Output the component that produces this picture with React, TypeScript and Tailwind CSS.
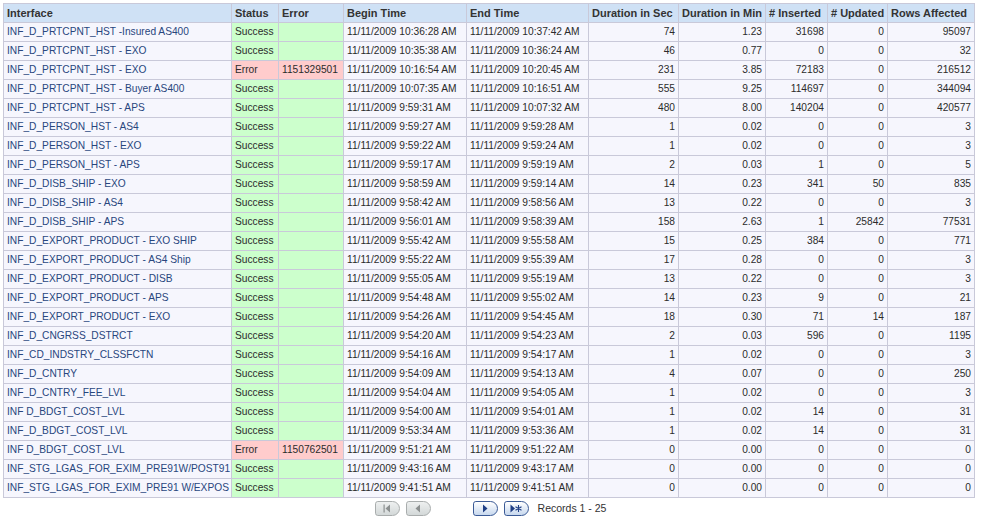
import React from 'react';

type Row = {
  name: string;
  error?: string;
  begin: string;
  end: string;
  sec: number;
  min: string;
  ins: number;
  upd: number;
  rows: number;
};

const D = '11/11/2009 ';

const rows: Row[] = [
  { name: 'INF_D_PRTCPNT_HST -Insured AS400', begin: '10:36:28 AM', end: '10:37:42 AM', sec: 74, min: '1.23', ins: 31698, upd: 0, rows: 95097 },
  { name: 'INF_D_PRTCPNT_HST - EXO', begin: '10:35:38 AM', end: '10:36:24 AM', sec: 46, min: '0.77', ins: 0, upd: 0, rows: 32 },
  { name: 'INF_D_PRTCPNT_HST - EXO', error: '1151329501', begin: '10:16:54 AM', end: '10:20:45 AM', sec: 231, min: '3.85', ins: 72183, upd: 0, rows: 216512 },
  { name: 'INF_D_PRTCPNT_HST - Buyer AS400', begin: '10:07:35 AM', end: '10:16:51 AM', sec: 555, min: '9.25', ins: 114697, upd: 0, rows: 344094 },
  { name: 'INF_D_PRTCPNT_HST - APS', begin: '9:59:31 AM', end: '10:07:32 AM', sec: 480, min: '8.00', ins: 140204, upd: 0, rows: 420577 },
  { name: 'INF_D_PERSON_HST - AS4', begin: '9:59:27 AM', end: '9:59:28 AM', sec: 1, min: '0.02', ins: 0, upd: 0, rows: 3 },
  { name: 'INF_D_PERSON_HST - EXO', begin: '9:59:22 AM', end: '9:59:24 AM', sec: 1, min: '0.02', ins: 0, upd: 0, rows: 3 },
  { name: 'INF_D_PERSON_HST - APS', begin: '9:59:17 AM', end: '9:59:19 AM', sec: 2, min: '0.03', ins: 1, upd: 0, rows: 5 },
  { name: 'INF_D_DISB_SHIP - EXO', begin: '9:58:59 AM', end: '9:59:14 AM', sec: 14, min: '0.23', ins: 341, upd: 50, rows: 835 },
  { name: 'INF_D_DISB_SHIP - AS4', begin: '9:58:42 AM', end: '9:58:56 AM', sec: 13, min: '0.22', ins: 0, upd: 0, rows: 3 },
  { name: 'INF_D_DISB_SHIP - APS', begin: '9:56:01 AM', end: '9:58:39 AM', sec: 158, min: '2.63', ins: 1, upd: 25842, rows: 77531 },
  { name: 'INF_D_EXPORT_PRODUCT - EXO SHIP', begin: '9:55:42 AM', end: '9:55:58 AM', sec: 15, min: '0.25', ins: 384, upd: 0, rows: 771 },
  { name: 'INF_D_EXPORT_PRODUCT - AS4 Ship', begin: '9:55:22 AM', end: '9:55:39 AM', sec: 17, min: '0.28', ins: 0, upd: 0, rows: 3 },
  { name: 'INF_D_EXPORT_PRODUCT - DISB', begin: '9:55:05 AM', end: '9:55:19 AM', sec: 13, min: '0.22', ins: 0, upd: 0, rows: 3 },
  { name: 'INF_D_EXPORT_PRODUCT - APS', begin: '9:54:48 AM', end: '9:55:02 AM', sec: 14, min: '0.23', ins: 9, upd: 0, rows: 21 },
  { name: 'INF_D_EXPORT_PRODUCT - EXO', begin: '9:54:26 AM', end: '9:54:45 AM', sec: 18, min: '0.30', ins: 71, upd: 14, rows: 187 },
  { name: 'INF_D_CNGRSS_DSTRCT', begin: '9:54:20 AM', end: '9:54:23 AM', sec: 2, min: '0.03', ins: 596, upd: 0, rows: 1195 },
  { name: 'INF_CD_INDSTRY_CLSSFCTN', begin: '9:54:16 AM', end: '9:54:17 AM', sec: 1, min: '0.02', ins: 0, upd: 0, rows: 3 },
  { name: 'INF_D_CNTRY', begin: '9:54:09 AM', end: '9:54:13 AM', sec: 4, min: '0.07', ins: 0, upd: 0, rows: 250 },
  { name: 'INF_D_CNTRY_FEE_LVL', begin: '9:54:04 AM', end: '9:54:05 AM', sec: 1, min: '0.02', ins: 0, upd: 0, rows: 3 },
  { name: 'INF D_BDGT_COST_LVL', begin: '9:54:00 AM', end: '9:54:01 AM', sec: 1, min: '0.02', ins: 14, upd: 0, rows: 31 },
  { name: 'INF_D_BDGT_COST_LVL', begin: '9:53:34 AM', end: '9:53:36 AM', sec: 1, min: '0.02', ins: 14, upd: 0, rows: 31 },
  { name: 'INF D_BDGT_COST_LVL', error: '1150762501', begin: '9:51:21 AM', end: '9:51:22 AM', sec: 0, min: '0.00', ins: 0, upd: 0, rows: 0 },
  { name: 'INF_STG_LGAS_FOR_EXIM_PRE91W/POST91', begin: '9:43:16 AM', end: '9:43:17 AM', sec: 0, min: '0.00', ins: 0, upd: 0, rows: 0 },
  { name: 'INF_STG_LGAS_FOR_EXIM_PRE91 W/EXPOS', begin: '9:41:51 AM', end: '9:41:51 AM', sec: 0, min: '0.00', ins: 0, upd: 0, rows: 0 },
];

const headers = [
  'Interface', 'Status', 'Error', 'Begin Time', 'End Time',
  'Duration in Sec', 'Duration in Min', '# Inserted', '# Updated', 'Rows Affected',
];
const widths = [228, 47, 65, 123, 122, 90, 87, 62, 60, 87];

const cell = 'border border-[#c9c9d9] px-[3px] py-0 h-[19px] whitespace-nowrap overflow-hidden';
const num = `${cell} text-right`;

function PagerButton({ enabled, children }: { enabled: boolean; children: React.ReactNode }) {
  return (
    <div
      className={
        enabled
          ? 'w-[25px] h-[15px] flex items-center justify-center rounded-l-[3px] rounded-r-[8px] border border-[#3a5a96] bg-gradient-to-b from-white to-[#c7d8ee]'
          : 'w-[25px] h-[15px] flex items-center justify-center rounded-l-[3px] rounded-r-[8px] border border-[#a9adad] bg-gradient-to-b from-[#eef0f0] to-[#d3d8d8]'
      }
    >
      {children}
    </div>
  );
}

export default function App() {
  return (
    <div className="bg-white w-[981px] h-[527px] pl-[3px] pt-[3px] font-['Liberation_Sans',Arial,sans-serif] text-[10.2px] text-[#2b2b2b]">
      <table className="table-fixed border-collapse w-[971px]">
        <colgroup>
          {widths.map((w, i) => (
            <col key={i} style={{ width: w }} />
          ))}
        </colgroup>
        <thead>
          <tr className="bg-[#cfe1f5]">
            {headers.map((h) => (
              <th
                key={h}
                className="border border-[#c9c9d9] px-[3px] py-0 h-[19px] whitespace-nowrap text-left font-bold text-[11px] text-[#333]"
              >
                {h}
              </th>
            ))}
          </tr>
        </thead>
        <tbody>
          {rows.map((r, i) => (
            <tr key={i} className="bg-[#f6f6fd]">
              <td className={`${cell} text-[#29467d]`}>{r.name}</td>
              <td className={`${cell} ${r.error ? 'bg-[#ffcccc]' : 'bg-[#ccffcc]'}`}>
                {r.error ? 'Error' : 'Success'}
              </td>
              <td className={`${cell} ${r.error ? 'bg-[#ffcccc]' : 'bg-[#ccffcc]'}`}>{r.error ?? ''}</td>
              <td className={cell}>{D + r.begin}</td>
              <td className={cell}>{D + r.end}</td>
              <td className={num}>{r.sec}</td>
              <td className={num}>{r.min}</td>
              <td className={num}>{r.ins}</td>
              <td className={num}>{r.upd}</td>
              <td className={num}>{r.rows}</td>
            </tr>
          ))}
        </tbody>
      </table>

      {/* pager */}
      <div className="flex items-center justify-center mt-[3px] pr-[3px] gap-[6px]">
        <PagerButton enabled={false}>
          <svg width="10" height="9" viewBox="0 0 10 9">
            <rect x="1.5" y="0.5" width="1.2" height="8" fill="#8c9090" />
            <path d="M8 0.5 L3.5 4.5 L8 8.5 Z" fill="#8c9090" />
          </svg>
        </PagerButton>
        <PagerButton enabled={false}>
          <svg width="10" height="9" viewBox="0 0 10 9">
            <path d="M7 0.5 L2.5 4.5 L7 8.5 Z" fill="#8c9090" />
          </svg>
        </PagerButton>
        <div className="w-[30px]" />
        <PagerButton enabled>
          <svg width="10" height="9" viewBox="0 0 10 9">
            <path d="M3 0.5 L7.5 4.5 L3 8.5 Z" fill="#1f3f86" />
          </svg>
        </PagerButton>
        <PagerButton enabled>
          <svg width="14" height="9" viewBox="0 0 14 9">
            <path d="M1.5 0.5 L6 4.5 L1.5 8.5 Z" fill="#1f3f86" />
            <path d="M9.5 1 V8 M6.5 2.8 L12.5 6.2 M12.5 2.8 L6.5 6.2" stroke="#1f3f86" strokeWidth="1.1" />
          </svg>
        </PagerButton>
        <span className="ml-[3px] text-[10.5px] text-[#333]">Records 1 - 25</span>
      </div>
    </div>
  );
}
